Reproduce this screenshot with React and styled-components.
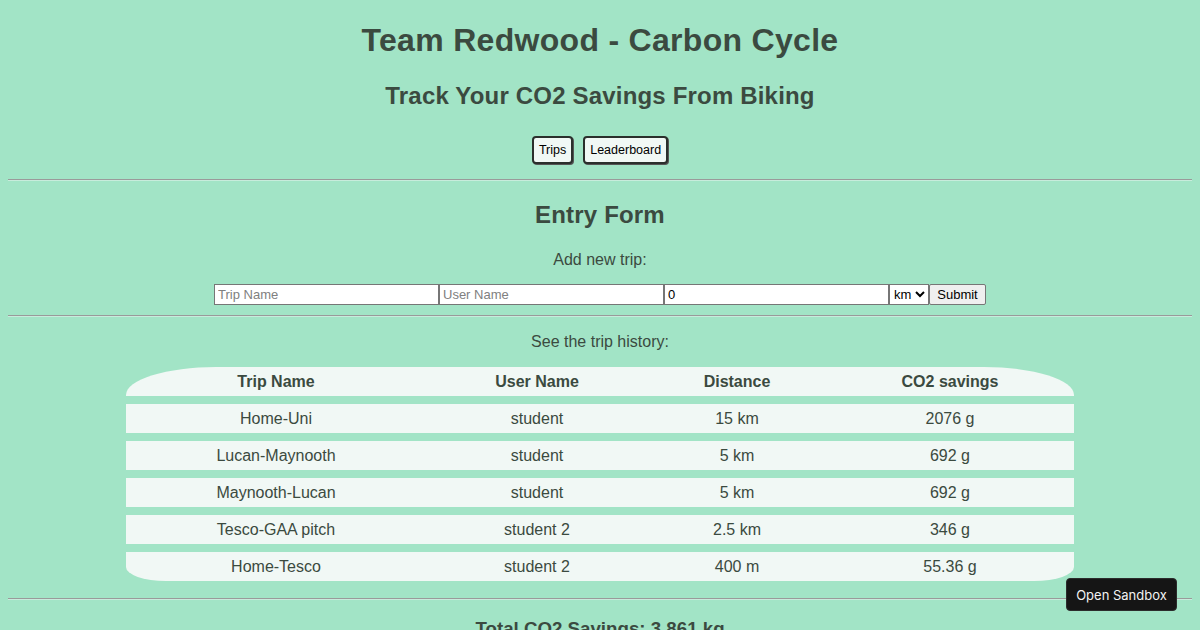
import styled, { createGlobalStyle } from "styled-components";

const trips = [
    { name: "Home-Uni", user: "student", distance: "15 km", co2: "2076 g" },
    { name: "Lucan-Maynooth", user: "student", distance: "5 km", co2: "692 g" },
    { name: "Maynooth-Lucan", user: "student", distance: "5 km", co2: "692 g" },
    { name: "Tesco-GAA pitch", user: "student 2", distance: "2.5 km", co2: "346 g" },
    { name: "Home-Tesco", user: "student 2", distance: "400 m", co2: "55.36 g" },
];

const GlobalStyle = createGlobalStyle`
    body {
        margin: 8px;
        background: #a2e4c6;
        color: #3b4a40;
        font-family: "Liberation Sans", Arial, sans-serif;
        text-align: center;
    }
`;

function App() {
    return (
        <>
            <GlobalStyle />
            <StTitle>Team Redwood - Carbon Cycle</StTitle>
            <StSubTitle>Track Your CO2 Savings From Biking</StSubTitle>
            <StNav>
                <StNavButton>Trips</StNavButton>
                <StNavButton>Leaderboard</StNavButton>
            </StNav>
            <StRule />
            <StSubTitle $below={22}>Entry Form</StSubTitle>
            <StText>Add new trip:</StText>
            <StForm onSubmit={(e) => e.preventDefault()}>
                <StInput type="text" placeholder="Trip Name" />
                <StInput type="text" placeholder="User Name" />
                <StInput type="number" defaultValue="0" />
                <StUnit defaultValue="km">
                    <option value="km">km</option>
                    <option value="m">m</option>
                </StUnit>
                <StSubmit type="submit">Submit</StSubmit>
            </StForm>
            <StRule />
            <StHistoryText>See the trip history:</StHistoryText>
            <StTable>
                <thead>
                    <tr>
                        <StHead $w={300}>Trip Name</StHead>
                        <StHead $w={222}>User Name</StHead>
                        <StHead $w={178}>Distance</StHead>
                        <StHead $w={248}>CO2 savings</StHead>
                    </tr>
                </thead>
                <tbody>
                    {trips.map((t) => (
                        <tr key={t.name}>
                            <StCell>{t.name}</StCell>
                            <StCell>{t.user}</StCell>
                            <StCell>{t.distance}</StCell>
                            <StCell>{t.co2}</StCell>
                        </tr>
                    ))}
                </tbody>
            </StTable>
            <StRule $above={9} />
            <StTotal>Total CO2 Savings: 3.861 kg</StTotal>
            <StSandbox>Open Sandbox</StSandbox>
        </>
    );
}

const StTitle = styled.h1`
    font-size: 32px;
    letter-spacing: 0.3px;
    margin: 14px 0 23px;
`;
const StSubTitle = styled.h2`
    font-size: 24px;
    letter-spacing: 0.18px;
    margin: 20px 0 ${(p) => p.$below ?? 20}px;
`;
const StTotal = styled.h3`
    font-size: 18.72px;
    margin: 18px 0;
`;
const StNav = styled.div`
    display: flex;
    justify-content: center;
    gap: 10px;
    margin: 26px 0 15px;
`;
const StNavButton = styled.button`
    height: 28px;
    padding: 0 5px;
    font-family: "Liberation Sans", Arial, sans-serif;
    font-size: 12.5px;
    color: #000;
    background: #f1f8f5;
    border: 2px solid #2b2f2c;
    border-radius: 4px;
    box-shadow: 1px 1px 0 #555;
`;
const StRule = styled.hr`
    margin: ${(p) => p.$above ?? 8}px 0 8px;
    border: none;
    border-top: 1px solid #9a9a9a;
    border-bottom: 1px solid #c8ecdc;
`;
const StText = styled.p`
    font-size: 16px;
    margin: 16px 0 15px;
`;
const StHistoryText = styled(StText)`
    margin: 16px 0 8px;
`;
const StForm = styled.form`
    display: flex;
    justify-content: center;
    align-items: stretch;
    margin: 0 0 10px;
    height: 21px;
`;
const StInput = styled.input`
    box-sizing: border-box;
    width: 225px;
    height: 21px;
    padding: 1px 3px;
    font-family: "Liberation Sans", Arial, sans-serif;
    font-size: 13px;
    color: #000;
    background: #fff;
    border: 1px solid #767676;
    margin: 0;
    -moz-appearance: textfield;
    &::placeholder {
        color: #808080;
    }
    &::-webkit-inner-spin-button,
    &::-webkit-outer-spin-button {
        -webkit-appearance: none;
        margin: 0;
    }
`;
const StUnit = styled.select`
    box-sizing: border-box;
    width: 40px;
    height: 21px;
    margin: 0;
    font-family: "Liberation Sans", Arial, sans-serif;
    font-size: 13px;
    background: #fff;
    border: 1px solid #767676;
`;
const StSubmit = styled.button`
    box-sizing: border-box;
    width: 57px;
    height: 21px;
    margin: 0;
    font-family: "Liberation Sans", Arial, sans-serif;
    font-size: 13px;
    color: #000;
    background: #efefef;
    border: 1px solid #767676;
    border-radius: 2px;
`;
const StTable = styled.table`
    width: 948px;
    margin: 0 auto;
    border-collapse: separate;
    border-spacing: 0 8px;
    font-size: 16px;
    color: #3b4a40;
`;
const StHead = styled.th`
    width: ${(p) => p.$w}px;
    height: 29px;
    padding: 0 4px;
    box-sizing: border-box;
    background: #f1f8f5;
    font-weight: bold;
    &:first-child {
        border-top-left-radius: 90px 28px;
    }
    &:last-child {
        border-top-right-radius: 90px 28px;
    }
`;
const StCell = styled.td`
    height: 29px;
    padding: 0 4px;
    box-sizing: border-box;
    background: #f1f8f5;
    tr:last-child > &:first-child {
        border-bottom-left-radius: 40px 14px;
    }
    tr:last-child > &:last-child {
        border-bottom-right-radius: 40px 14px;
    }
`;
const StSandbox = styled.button`
    position: fixed;
    right: 23px;
    bottom: 19px;
    width: 111px;
    height: 33px;
    font-family: Inter, "Liberation Sans", sans-serif;
    font-size: 13px;
    color: #f2f2f2;
    background: #151515;
    border: 1px solid #2c2c2c;
    border-radius: 4px;
`;

export default App;
